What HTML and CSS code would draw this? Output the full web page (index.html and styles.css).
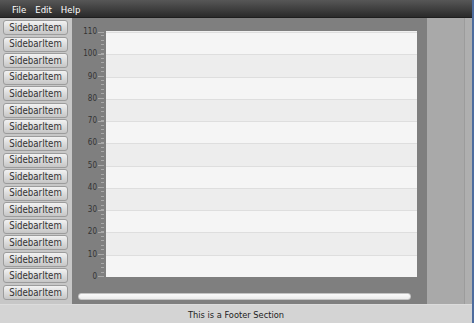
FILE: index.html
```html
<!DOCTYPE html>
<html>
<head>
<meta charset="utf-8">
<link rel="stylesheet" href="styles.css">
</head>
<body>
<div class="app">
  <div class="menubar">
    <span class="menu">File</span>
    <span class="menu">Edit</span>
    <span class="menu">Help</span>
  </div>
  <div class="middle">
    <div class="sidebar">
      <div class="item">SidebarItem</div>
      <div class="item">SidebarItem</div>
      <div class="item">SidebarItem</div>
      <div class="item">SidebarItem</div>
      <div class="item">SidebarItem</div>
      <div class="item">SidebarItem</div>
      <div class="item">SidebarItem</div>
      <div class="item">SidebarItem</div>
      <div class="item">SidebarItem</div>
      <div class="item">SidebarItem</div>
      <div class="item">SidebarItem</div>
      <div class="item">SidebarItem</div>
      <div class="item">SidebarItem</div>
      <div class="item">SidebarItem</div>
      <div class="item">SidebarItem</div>
      <div class="item">SidebarItem</div>
      <div class="item">SidebarItem</div>
    </div>
    <div class="center">
      <div class="chart">
        <div class="axis">
          <div class="ticks">
            <div class="tick"><span class="lbl">110</span><span class="mark"></span></div>
            <div class="tick"><span class="lbl">100</span><span class="mark"></span></div>
            <div class="tick"><span class="lbl">90</span><span class="mark"></span></div>
            <div class="tick"><span class="lbl">80</span><span class="mark"></span></div>
            <div class="tick"><span class="lbl">70</span><span class="mark"></span></div>
            <div class="tick"><span class="lbl">60</span><span class="mark"></span></div>
            <div class="tick"><span class="lbl">50</span><span class="mark"></span></div>
            <div class="tick"><span class="lbl">40</span><span class="mark"></span></div>
            <div class="tick"><span class="lbl">30</span><span class="mark"></span></div>
            <div class="tick"><span class="lbl">20</span><span class="mark"></span></div>
            <div class="tick"><span class="lbl">10</span><span class="mark"></span></div>
            <div class="tick"><span class="lbl">0</span><span class="mark"></span></div>
          </div>
        </div>
        <div class="plot">
          <div class="band-top"></div>
          <div class="band light"></div>
          <div class="band dark"></div>
          <div class="band light"></div>
          <div class="band dark"></div>
          <div class="band light"></div>
          <div class="band dark"></div>
          <div class="band light"></div>
          <div class="band dark"></div>
          <div class="band light"></div>
          <div class="band dark"></div>
          <div class="band light"></div>
        </div>
      </div>
      <div class="hscroll"></div>
    </div>
    <div class="right">
      <div class="right-main"></div>
      <div class="right-edge"></div>
    </div>
  </div>
  <div class="footer">This is a Footer Section</div>
</div>
</body>
</html>
```
FILE: styles.css
```css
html, body {
  margin: 0;
  padding: 0;
}
body {
  width: 474px;
  height: 323px;
  overflow: hidden;
  font-family: "DejaVu Sans Condensed", "DejaVu Sans", sans-serif;
}
.app {
  display: flex;
  flex-direction: column;
  height: 323px;
  border-right: 2px solid #4d6c9e;
}
.menubar {
  height: 18px;
  flex: none;
  display: flex;
  align-items: center;
  gap: 9px;
  padding-left: 12px;
  background: linear-gradient(#575757, #3c3c3c 60%, #2a2a2a);
  border-bottom: 1px solid #1e1e1e;
  box-sizing: border-box;
}
.menu {
  color: #ffffff;
  font-size: 9.5px;
  padding-top: 1px;
}
.middle {
  flex: 1;
  display: flex;
  min-height: 0;
}
.sidebar {
  width: 72px;
  flex: none;
  box-sizing: border-box;
  padding: 2px 4px 4px 3px;
  background: #c7c7c7;
  display: flex;
  flex-direction: column;
  justify-content: space-between;
}
.item {
  height: 15px;
  box-sizing: border-box;
  border: 1px solid #9c9c9c;
  border-radius: 3px;
  background: linear-gradient(#f2f2f2, #dadada 55%, #c6c6c6);
  color: #333;
  font-size: 9.6px;
  display: flex;
  align-items: center;
  justify-content: center;
  line-height: 1;
}
.center {
  flex: 1;
  background: #7f7f7f;
  display: flex;
  flex-direction: column;
  padding: 13px 10px 0 0;
}
.chart {
  height: 246px;
  display: flex;
}
.axis {
  width: 34px;
  flex: none;
  box-sizing: border-box;
  padding-top: 1px;
  background-image: repeating-linear-gradient(to top, #a9a9a9 0 1px, transparent 1px 4.454px);
  background-size: 3px 245px;
  background-position: right 2px bottom;
  background-repeat: no-repeat;
}
.ticks {
  height: 245px;
  display: flex;
  flex-direction: column;
  justify-content: space-between;
}
.tick {
  height: 0;
  display: flex;
  align-items: center;
  justify-content: flex-end;
  padding-right: 2px;
}
.lbl {
  font-size: 8px;
  color: #333;
  margin-right: 1px;
  line-height: 1;
}
.mark {
  width: 6px;
  height: 1px;
  background: #a9a9a9;
}
.plot {
  flex: 1;
  display: flex;
  flex-direction: column;
}
.band-top {
  height: 1px;
  background: #f0f0f0;
}
.band {
  flex: 1;
  border-top: 1px solid #dedede;
}
.band.light {
  background: #f5f5f5;
}
.band.dark {
  background: #ededed;
}
.hscroll {
  margin: 16px 6px 0 6px;
  height: 7px;
  box-sizing: border-box;
  border: 1px solid #c4c4c4;
  border-radius: 3px;
  background: linear-gradient(#fafafa, #ececec);
}
.right {
  width: 45px;
  flex: none;
  display: flex;
}
.right-main {
  flex: 1;
  background: #a9a9a9;
  border-right: 1px solid #9c9c9c;
}
.right-edge {
  width: 7px;
  background: #afafaf;
}
.footer {
  height: 19px;
  flex: none;
  box-sizing: border-box;
  background: #d4d4d4;
  border-top: 1px solid #dcdcdc;
  display: flex;
  align-items: center;
  justify-content: center;
  font-size: 9.2px;
  color: #222;
}
```
